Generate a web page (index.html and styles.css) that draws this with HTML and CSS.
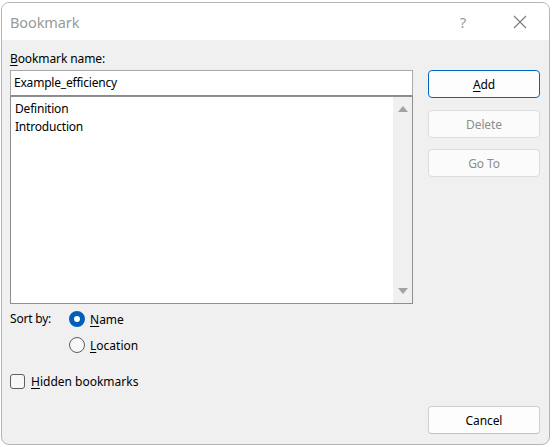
FILE: index.html
```html
<!DOCTYPE html>
<html>
<head>
<meta charset="utf-8">
<link rel="stylesheet" href="styles.css">
</head>
<body>
<div class="dialog">
  <div class="titlebar">
    <span class="title">Bookmark</span>
    <span class="help">?</span>
    <span class="close">
      <svg width="14" height="14" viewBox="0 0 14 14"><path d="M1 1 L13 13 M13 1 L1 13" stroke="#7a7a7a" stroke-width="1.1" fill="none"/></svg>
    </span>
  </div>
  <div class="content">
    <div class="main">
      <div class="leftcol">
        <div class="label"><u>B</u>ookmark name:</div>
        <div class="input">Example_efficiency</div>
        <div class="listbox">
          <div class="items">
            <div class="item">Definition</div>
            <div class="item">Introduction</div>
          </div>
          <div class="scrollbar">
            <span class="arrow up"></span>
            <span class="arrow down"></span>
          </div>
        </div>
      </div>
      <div class="rightcol">
        <div class="btn primary"><u>A</u>dd</div>
        <div class="btn disabled">Delete</div>
        <div class="btn disabled goto">Go To</div>
      </div>
    </div>
    <div class="sortrow">
      <div class="sortlabel">Sort by:</div>
      <div class="radios">
        <div class="radio"><span class="dot checked"></span><span><u>N</u>ame</span></div>
        <div class="radio"><span class="dot"></span><span><u>L</u>ocation</span></div>
      </div>
    </div>
    <div class="checkrow"><span class="box"></span><span><u>H</u>idden bookmarks</span></div>
    <div class="footer">
      <div class="btn">Cancel</div>
    </div>
  </div>
</div>
</body>
</html>
```
FILE: styles.css
```css
* { box-sizing: border-box; }
html, body { margin: 0; padding: 0; background: #ffffff; }
body {
  font-family: "Noto Sans", "Open Sans", sans-serif;
  font-size: 12px;
  color: #000;
  padding: 2px 3px 0 1px;
}
u { text-decoration: underline; text-underline-offset: 2px; text-decoration-thickness: 1px; }
.dialog {
  width: 549px;
  height: 443px;
  border: 1px solid #b4b4b4;
  border-radius: 8px;
  overflow: hidden;
  display: flex;
  flex-direction: column;
  background: #f0f0f0;
}
.titlebar {
  height: 37px;
  background: #ffffff;
  display: flex;
  align-items: center;
  padding-left: 8px;
  flex-shrink: 0;
}
.title { font-size: 14.5px; color: #9a9a9a; flex: 1; letter-spacing: -0.1px; }
.help { font-size: 15px; color: #9a9a9a; width: 14px; margin-right: 43px; text-align: center; }
.close { width: 14px; height: 14px; margin-right: 22px; display: flex; }
.content {
  flex: 1;
  display: flex;
  flex-direction: column;
  padding: 10px 9px 10px 8px;
}
.main { display: flex; }
.leftcol { width: 403px; display: flex; flex-direction: column; }
.label { height: 20px; line-height: 18px; letter-spacing: -0.1px; }
.input {
  height: 26px;
  background: #fff;
  border: 1px solid #a9a9a9;
  border-bottom-color: #8a8a8a;
  padding: 0 3px;
  line-height: 24px;
  letter-spacing: -0.2px;
}
.listbox {
  height: 208px;
  background: #fff;
  border: 1px solid #8e8f8f;
  display: flex;
}
.items { flex: 1; padding: 3px 4px; }
.item { height: 18px; line-height: 18px; letter-spacing: -0.2px; }
.scrollbar {
  width: 19px;
  background: #f0f0f0;
  display: flex;
  flex-direction: column;
  justify-content: space-between;
  align-items: center;
  padding: 9px 0 9px 0;
}
.arrow { width: 0; height: 0; border-left: 5px solid transparent; border-right: 5px solid transparent; }
.arrow.up { border-bottom: 6px solid #a3a3a3; }
.arrow.down { border-top: 6px solid #a3a3a3; }
.rightcol { margin-left: 15px; padding-top: 20px; width: 112px; display: flex; flex-direction: column; }
.btn {
  width: 112px;
  height: 28px;
  border: 1px solid #d0d0d0;
  border-bottom-color: #c2c2c2;
  border-radius: 4px;
  background: #fdfdfd;
  display: flex;
  align-items: center;
  justify-content: center;
  letter-spacing: -0.1px;
}
.btn.primary { border: 1px solid #0067c0; background: #fdfdfd; }
.btn.disabled { color: #8d8d8d; background: #fbfbfb; border-color: #dcdcdc; margin-top: 12px; }
.btn.goto { margin-top: 11px; }
.sortrow { display: flex; margin-top: 6px; }
.sortlabel { width: 59px; line-height: 18px; letter-spacing: -0.2px; }
.radios { display: flex; flex-direction: column; gap: 8px; }
.radio { display: flex; align-items: center; height: 18px; gap: 5px; }
.dot {
  width: 16px; height: 16px; border-radius: 50%;
  border: 1px solid #5e5e5e; background: #f7f7f7;
  display: inline-block; flex-shrink: 0;
}
.dot.checked { border: 5px solid #005fb8; background: #fff; }
.checkrow { display: flex; align-items: center; gap: 6px; margin-top: 18px; height: 18px; }
.box { width: 15px; height: 15px; border: 1px solid #5e5e5e; border-radius: 3px; background: #f7f7f7; flex-shrink: 0; }
.footer { margin-top: auto; display: flex; justify-content: flex-end; }
```
